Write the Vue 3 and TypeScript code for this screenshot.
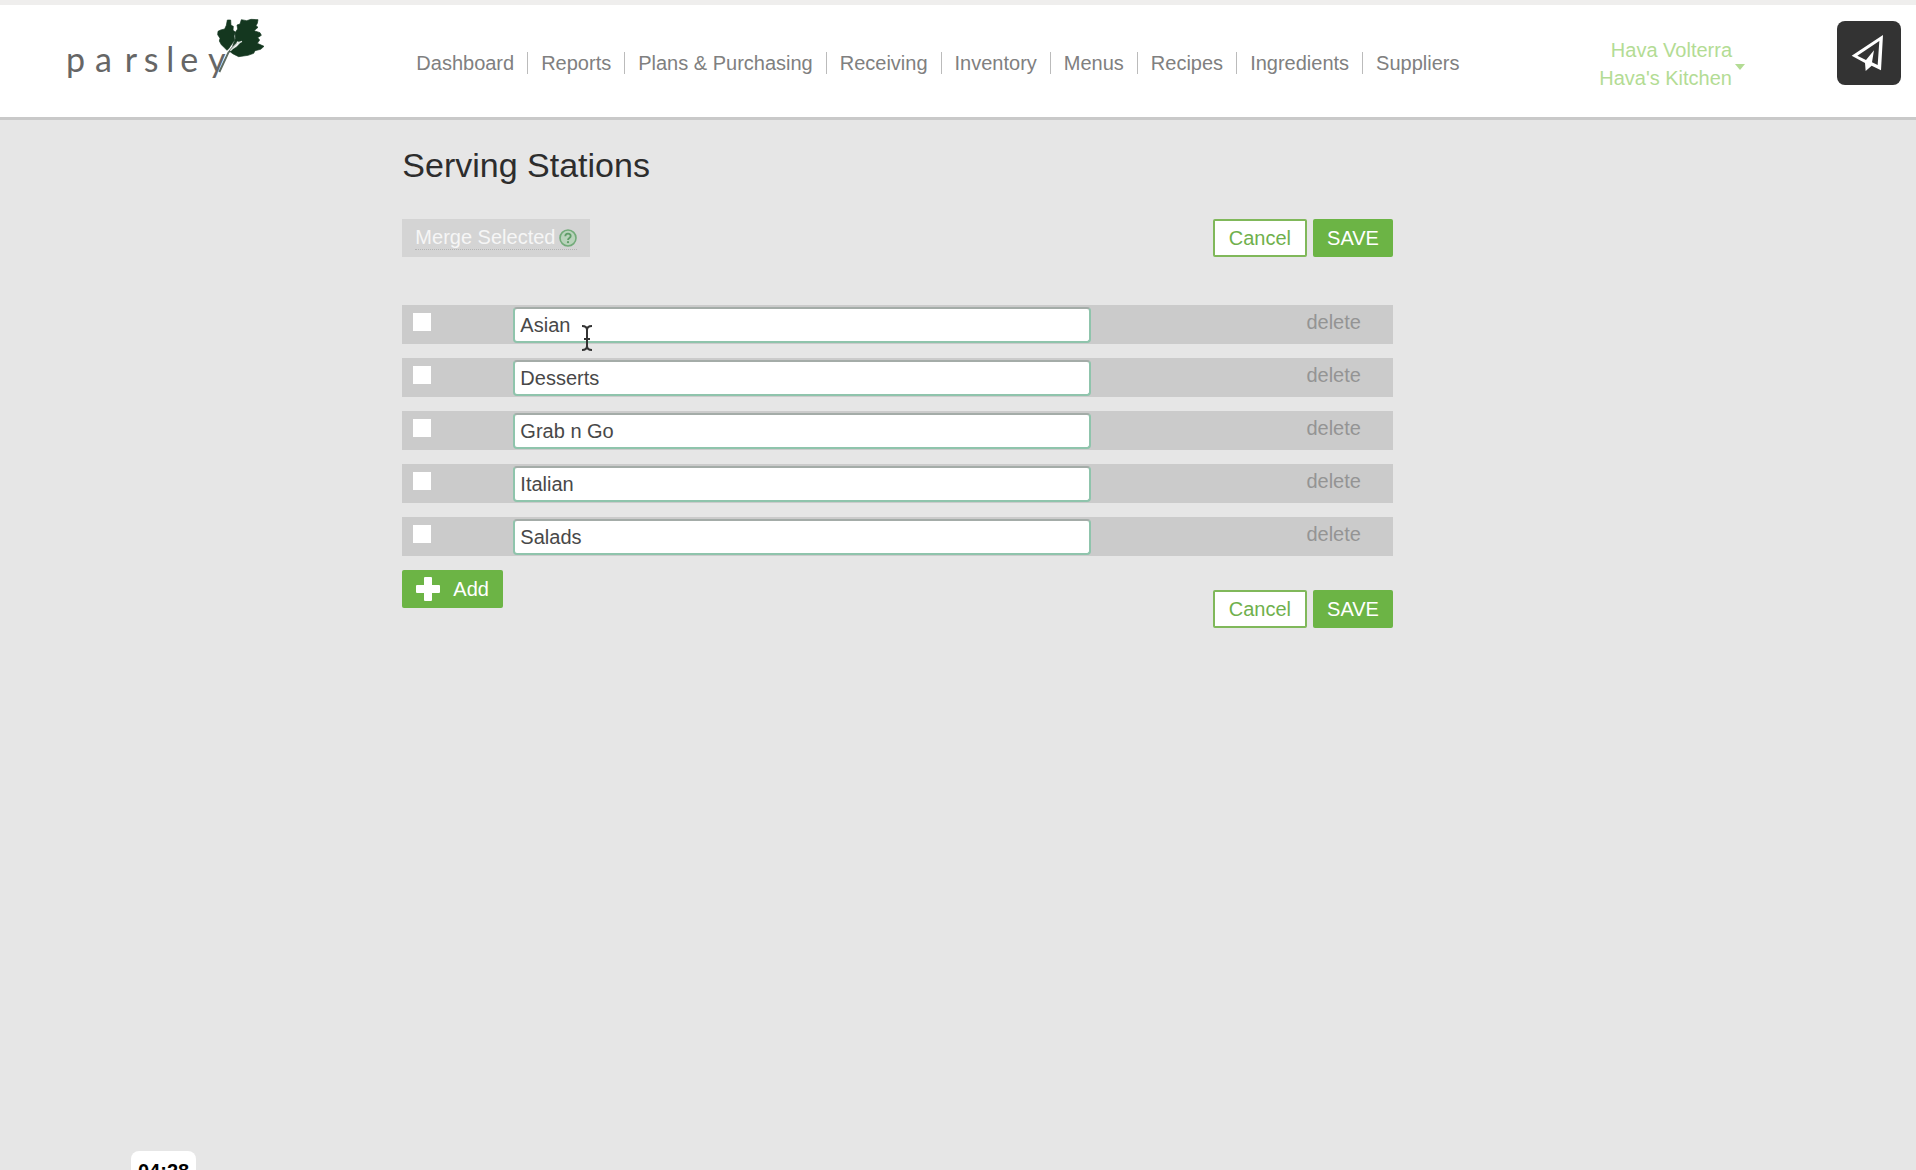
<script setup lang="ts">
import { ref } from 'vue'

interface Station {
  id: number
  name: string
  selected: boolean
}

const navItems: string[] = [
  'Dashboard',
  'Reports',
  'Plans & Purchasing',
  'Receiving',
  'Inventory',
  'Menus',
  'Recipes',
  'Ingredients',
  'Suppliers',
]

const stations = ref<Station[]>(
  ['Asian', 'Desserts', 'Grab n Go', 'Italian', 'Salads'].map((name, i) => ({
    id: i + 1,
    name,
    selected: false,
  })),
)

function removeStation(id: number): void {
  stations.value = stations.value.filter((s) => s.id !== id)
}

function addStation(): void {
  const id = Math.max(0, ...stations.value.map((s) => s.id)) + 1
  stations.value.push({ id, name: '', selected: false })
}
</script>

<template>
  <div class="page">
    <header class="header">
      <a href="#" class="logo" aria-label="parsley">
        <svg viewBox="48 42 600 210" width="200" height="70">
          <text class="wordmark" x="48 135 224 281 349 391 474" y="217">parsley</text>
          <path d="M508 216 L535 158 L560 128" fill="none" stroke="#5d6b62" stroke-width="6" />
          <path
            class="leaf"
            d="M532 60 L542 60 L543 76 L550 79 L549 91 L556 96 L552 108 L554 120 L536 146 L531 151 L522 142 L514 134 L508 123 L510 115 L503 104 L504 94 L512 90 L524 87 L529 76 Z"
          />
          <path
            class="leaf"
            d="M574 59 L590 62 L603 58 L624 59 L622 70 L618 77 L624 82 L612 92 L630 98 L634 106 L623 113 L629 120 L622 130 L642 139 L632 148 L615 152 L611 160 L594 166 L566 170 L548 161 L539 154 L560 141 L573 127 L563 123 L548 137 L556 116 L555 98 L563 87 L561 75 L570 72 Z"
          />
          <path d="M541 152 L562 130 L576 124" fill="none" stroke="#dfe6e1" stroke-width="4" />
        </svg>
      </a>
      <nav class="nav">
        <a v-for="item in navItems" :key="item" href="#">{{ item }}</a>
      </nav>
      <button type="button" class="account">
        <span class="account-names">Hava Volterra<br />Hava's Kitchen</span>
        <span class="caret"></span>
      </button>
      <button type="button" class="share" aria-label="Share">
        <svg viewBox="831 63 192 192" width="64" height="64">
          <path
            fill="#fff"
            fill-rule="evenodd"
            d="M875 167 L969 105 L963 211 L935 197 L917 213 L915 189 Z M892 167 L918 180 L942 151 L936 187 L953 195 L958 123 Z"
          />
        </svg>
      </button>
    </header>

    <main class="content">
      <h1>Serving Stations</h1>

      <div class="toolbar">
        <button type="button" class="merge" disabled>
          <span class="merge-label">
            Merge Selected
            <svg viewBox="0 0 18 18" width="18" height="18">
              <circle cx="9" cy="9" r="8" fill="#b9d3bb" stroke="#72ab79" stroke-width="1.6" />
              <path
                d="M6.3 7.2 C6.3 3.8 11.7 3.8 11.7 7 C11.7 9 9 8.8 9 11"
                fill="none"
                stroke="#5f9d68"
                stroke-width="1.8"
              />
              <circle cx="9" cy="13.2" r="1.1" fill="#5f9d68" />
            </svg>
          </span>
        </button>
        <div class="actions">
          <button type="button" class="btn btn-outline">Cancel</button>
          <button type="button" class="btn btn-solid">SAVE</button>
        </div>
      </div>

      <ul class="stations">
        <li v-for="(station, i) in stations" :key="station.id" class="station">
          <input
            v-model="station.selected"
            type="checkbox"
            class="check"
            :aria-label="'Select ' + station.name"
          />
          <input v-model="station.name" type="text" class="name" aria-label="Station name" />
          <a href="#" class="delete" @click.prevent="removeStation(station.id)">delete</a>
          <svg v-if="i === 0" class="pointer" viewBox="0 0 12 28" width="12" height="28">
            <path
              d="M1 2 Q6 2 6 6 Q6 2 11 2 M6 5 V23 M1 26 Q6 26 6 22 Q6 26 11 26 M3 15 H9"
              fill="none"
              stroke="#333"
              stroke-width="2"
            />
          </svg>
        </li>
      </ul>

      <div class="footer-bar">
        <button type="button" class="btn btn-solid add" @click="addStation">
          <svg viewBox="0 0 24 24" width="24" height="24">
            <path
              fill="#fff"
              d="M9 0 H15 Q16 0 16 1 V8 H23 Q24 8 24 9 V15 Q24 16 23 16 H16 V23 Q16 24 15 24 H9 Q8 24 8 23 V16 H1 Q0 16 0 15 V9 Q0 8 1 8 H8 V1 Q8 0 9 0 Z"
            />
          </svg>
          <span>Add</span>
        </button>
        <div class="actions actions-bottom">
          <button type="button" class="btn btn-outline">Cancel</button>
          <button type="button" class="btn btn-solid">SAVE</button>
        </div>
      </div>
    </main>

    <div class="timecode">04:28</div>
  </div>
</template>

<style>
body {
  background: #e6e6e6;
}
</style>

<style scoped>
.page,
.page button,
.page input {
  font-family: 'Liberation Sans', Arial, sans-serif;
  font-size: 20px;
}

.page *,
.page {
  box-sizing: border-box;
}

.page {
  min-height: 100vh;
  background: #e6e6e6;
  line-height: 24px;
}

button {
  margin: 0;
  border: 0;
  cursor: pointer;
}

a {
  text-decoration: none;
}

.header {
  display: grid;
  grid-template-columns: 21.9% auto 1fr auto;
  align-items: start;
  height: 120px;
  padding-right: 15px;
  background: #fff;
  border-top: 5px solid #efeeed;
  border-bottom: 3px solid #c9c9c9;
}

.logo {
  padding: 9px 0 0 66px;
}

.logo svg {
  display: block;
  overflow: visible;
}

.wordmark {
  font-family: Lato, 'Liberation Sans', sans-serif;
  font-size: 102px;
  font-weight: 400;
  fill: #666;
}

.leaf {
  fill: #14371f;
  stroke: #14371f;
  stroke-width: 2;
  stroke-linejoin: round;
}

.nav {
  display: flex;
  padding-top: 47px;
}

.nav a {
  padding-right: 13px;
  color: #808080;
  line-height: 22px;
  white-space: nowrap;
}

.nav a + a {
  padding-left: 13px;
  border-left: 1px solid #bbb;
}

.account {
  display: flex;
  align-items: center;
  justify-self: end;
  gap: 3px;
  margin: 31px 92px 0 0;
  padding: 0;
  background: none;
  color: #b3dc94;
  line-height: 28px;
  text-align: right;
}

.caret {
  width: 10px;
  height: 6px;
  margin-top: 6px;
  background: #b3dc94;
  clip-path: polygon(0 0, 100% 0, 50% 100%);
}

.share {
  width: 64px;
  height: 64px;
  margin-top: 16px;
  padding: 0;
  background: #333;
  border-radius: 8px;
}

.share svg {
  display: block;
}

.content {
  width: 51.7%;
  margin-left: 21%;
  padding-top: 25px;
}

h1 {
  margin: 0;
  color: #2d2d2d;
  font-size: 34px;
  font-weight: 400;
  line-height: 40px;
}

.toolbar {
  display: flex;
  justify-content: space-between;
  margin-top: 34px;
}

.merge {
  height: 38px;
  padding: 0 13px;
  background: #d4d4d4;
  color: #f6f6f6;
}

.merge-label {
  display: flex;
  align-items: center;
  gap: 4px;
  border-bottom: 1px dotted #b4b4b4;
}

.actions {
  display: flex;
  gap: 6px;
}

.btn {
  height: 38px;
  padding: 0 14px;
  border-radius: 2px;
}

.btn-outline {
  background: #fff;
  border: 2px solid #80b85a;
  color: #6fb04c;
}

.btn-solid {
  background: #6cb445;
  color: #fff;
}

.stations {
  display: flex;
  flex-direction: column;
  gap: 14px;
  margin: 48px 0 0;
  padding: 0;
  list-style: none;
}

.station {
  position: relative;
  display: flex;
  align-items: flex-start;
  height: 39px;
  padding: 0 32px 0 11px;
  background: #cbcbcb;
}

.check {
  appearance: none;
  flex: none;
  width: 18px;
  height: 18px;
  margin: 8px 82px 0 0;
  background: #fff;
}

.name {
  flex: 0 0 61%;
  height: 36px;
  margin: 2px 0 0;
  padding: 0 5px;
  background: #fff;
  border: 2px solid #8fc4ac;
  border-top-color: #a4aca8;
  border-radius: 4px;
  color: #484848;
}

.delete {
  margin: 5px 0 0 auto;
  color: #949494;
}

.pointer {
  position: absolute;
  top: 19px;
  left: 179px;
}

.footer-bar {
  display: flex;
  align-items: flex-start;
  justify-content: space-between;
  margin-top: 14px;
}

.add {
  display: flex;
  align-items: center;
  gap: 13px;
}

.actions-bottom {
  margin-top: 20px;
}

.timecode {
  position: fixed;
  bottom: -21px;
  left: 131px;
  padding: 0 7px;
  background: #fff;
  border-radius: 8px;
  color: #000;
  font-weight: 700;
  line-height: 40px;
}
</style>
